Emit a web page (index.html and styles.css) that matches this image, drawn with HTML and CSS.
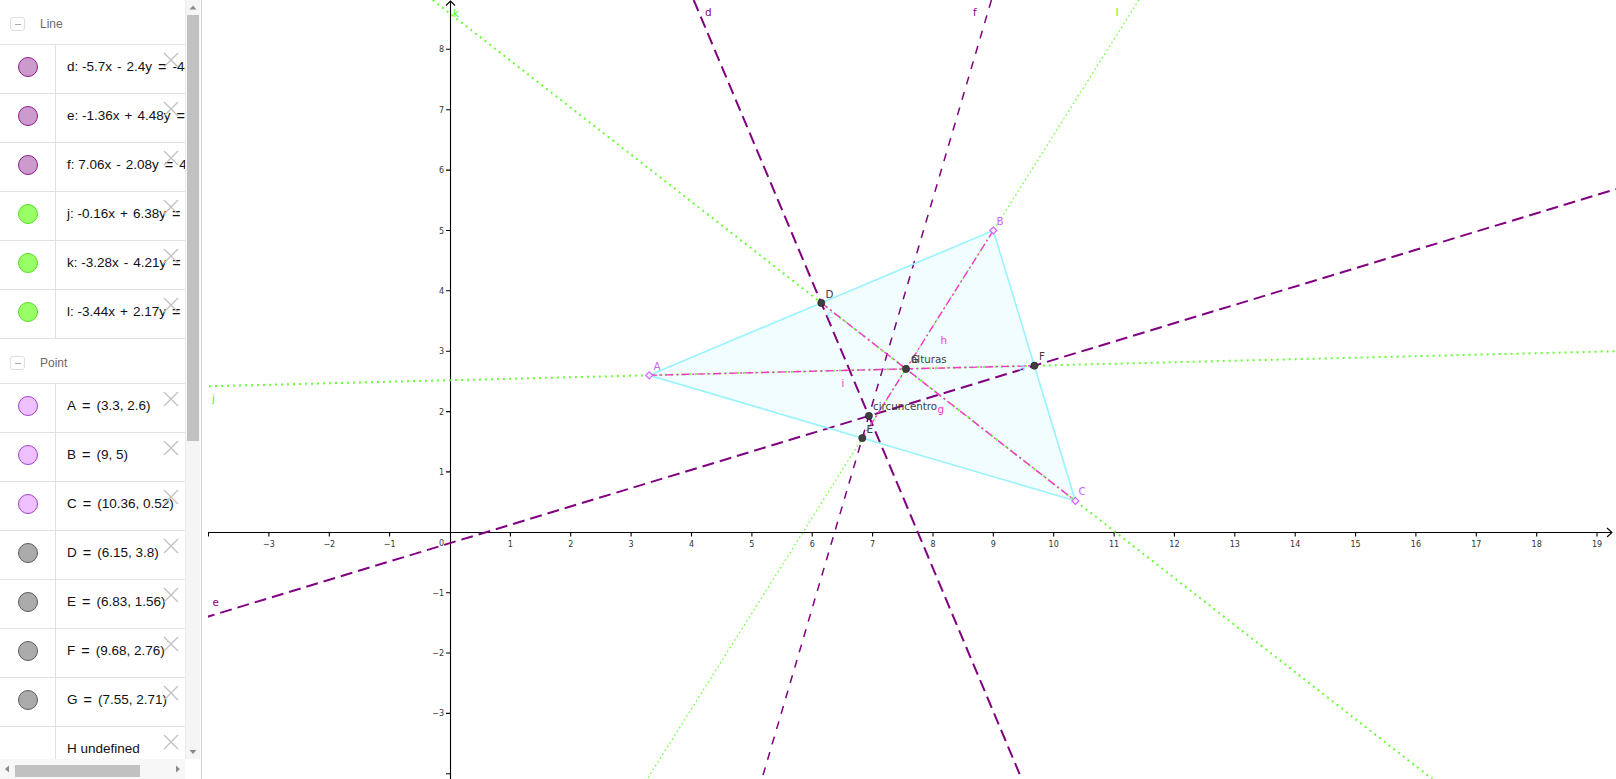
FILE: index.html
```html
<!DOCTYPE html>
<html lang="es">
<head>
<meta charset="utf-8">
<title>GeoGebra</title>
<link rel="stylesheet" href="styles.css">
</head>
<body>
<div class="app">
  <aside class="algebra">
    <div class="list">
      <div class="group-head"><span class="toggle"></span><span class="head-label">Line</span></div>
      <div class="item"><div class="marble-cell"><span class="marble m-purple"></span></div><div class="desc">d: -5.7x<span class="op">-</span>2.4y<span class="eq">=</span>-44.18</div><svg class="del" viewBox="0 0 16 16"><path d="M1 1L15 15M15 1L1 15"/></svg></div>
      <div class="item"><div class="marble-cell"><span class="marble m-purple"></span></div><div class="desc">e: -1.36x<span class="op">+</span>4.48y<span class="eq">=</span>-0.8</div><svg class="del" viewBox="0 0 16 16"><path d="M1 1L15 15M15 1L1 15"/></svg></div>
      <div class="item"><div class="marble-cell"><span class="marble m-purple"></span></div><div class="desc">f: 7.06x<span class="op">-</span>2.08y<span class="eq">=</span>44.97</div><svg class="del" viewBox="0 0 16 16"><path d="M1 1L15 15M15 1L1 15"/></svg></div>
      <div class="item"><div class="marble-cell"><span class="marble m-green"></span></div><div class="desc">j: -0.16x<span class="op">+</span>6.38y<span class="eq">=</span>16.06</div><svg class="del" viewBox="0 0 16 16"><path d="M1 1L15 15M15 1L1 15"/></svg></div>
      <div class="item"><div class="marble-cell"><span class="marble m-green"></span></div><div class="desc">k: -3.28x<span class="op">-</span>4.21y<span class="eq">=</span>-36.17</div><svg class="del" viewBox="0 0 16 16"><path d="M1 1L15 15M15 1L1 15"/></svg></div>
      <div class="item"><div class="marble-cell"><span class="marble m-green"></span></div><div class="desc">l: -3.44x<span class="op">+</span>2.17y<span class="eq">=</span>-20.11</div><svg class="del" viewBox="0 0 16 16"><path d="M1 1L15 15M15 1L1 15"/></svg></div>
      <div class="group-head"><span class="toggle"></span><span class="head-label">Point</span></div>
      <div class="item"><div class="marble-cell"><span class="marble m-violet"></span></div><div class="desc">A<span class="eq">=</span>(3.3, 2.6)</div><svg class="del" viewBox="0 0 16 16"><path d="M1 1L15 15M15 1L1 15"/></svg></div>
      <div class="item"><div class="marble-cell"><span class="marble m-violet"></span></div><div class="desc">B<span class="eq">=</span>(9, 5)</div><svg class="del" viewBox="0 0 16 16"><path d="M1 1L15 15M15 1L1 15"/></svg></div>
      <div class="item"><div class="marble-cell"><span class="marble m-violet"></span></div><div class="desc">C<span class="eq">=</span>(10.36, 0.52)</div><svg class="del" viewBox="0 0 16 16"><path d="M1 1L15 15M15 1L1 15"/></svg></div>
      <div class="item"><div class="marble-cell"><span class="marble m-gray"></span></div><div class="desc">D<span class="eq">=</span>(6.15, 3.8)</div><svg class="del" viewBox="0 0 16 16"><path d="M1 1L15 15M15 1L1 15"/></svg></div>
      <div class="item"><div class="marble-cell"><span class="marble m-gray"></span></div><div class="desc">E<span class="eq">=</span>(6.83, 1.56)</div><svg class="del" viewBox="0 0 16 16"><path d="M1 1L15 15M15 1L1 15"/></svg></div>
      <div class="item"><div class="marble-cell"><span class="marble m-gray"></span></div><div class="desc">F<span class="eq">=</span>(9.68, 2.76)</div><svg class="del" viewBox="0 0 16 16"><path d="M1 1L15 15M15 1L1 15"/></svg></div>
      <div class="item"><div class="marble-cell"><span class="marble m-gray"></span></div><div class="desc">G<span class="eq">=</span>(7.55, 2.71)</div><svg class="del" viewBox="0 0 16 16"><path d="M1 1L15 15M15 1L1 15"/></svg></div>
      <div class="item"><div class="marble-cell"></div><div class="desc">H undefined</div><svg class="del" viewBox="0 0 16 16"><path d="M1 1L15 15M15 1L1 15"/></svg></div>
    </div>
    <div class="vscroll">
      <svg class="sb-btn" viewBox="0 0 14 14"><path d="M3.5 9.5L7 5.5L10.5 9.5Z"/></svg>
      <div class="vthumb"></div>
      <div class="sb-fill"></div>
      <svg class="sb-btn" viewBox="0 0 14 14"><path d="M3.5 5L7 9L10.5 5Z"/></svg>
    </div>
    <div class="hscroll">
      <svg class="sb-hbtn" viewBox="0 0 14 14"><path d="M9 3.5L5 7L9 10.5Z"/></svg>
      <div class="hthumb"></div>
      <div class="sb-fill"></div>
      <svg class="sb-hbtn" viewBox="0 0 14 14"><path d="M5 3.5L9 7L5 10.5Z"/></svg>
    </div>
    <div class="corner"></div>
  </aside>
  <div class="splitter"></div>
  <main class="graphics">
    <svg class="canvas" viewBox="208 0 1408 779" width="1408" height="779">
      <polygon class="tri" points="649.2,375.3 993.3,230.5 1075.4,500.9"/>
      <g class="axes">
        <line x1="208" y1="532.5" x2="1612" y2="532.5"/>
        <polyline points="1607,528 1612,532.5 1607,537"/>
        <line x1="450.5" y1="779" x2="450.5" y2="1"/>
        <polyline points="446,5.5 450.5,1 455,5.5"/>
        <path d="M208.5 532.5v4M268.9 532.5v4M329.3 532.5v4M389.6 532.5v4M510.4 532.5v4M570.7 532.5v4M631.1 532.5v4M691.5 532.5v4M751.9 532.5v4M812.2 532.5v4M872.6 532.5v4M933 532.5v4M993.3 532.5v4M1053.7 532.5v4M1114.1 532.5v4M1174.4 532.5v4M1234.8 532.5v4M1295.2 532.5v4M1355.6 532.5v4M1415.9 532.5v4M1476.3 532.5v4M1536.7 532.5v4M1597 532.5v4"/>
        <path d="M446 49.3h4.5M446 109.7h4.5M446 170.1h4.5M446 230.5h4.5M446 290.8h4.5M446 351.2h4.5M446 411.6h4.5M446 471.9h4.5M446 592.7h4.5M446 653h4.5M446 713.4h4.5M446 773.8h4.5"/>
      </g>
      <g class="ticklbl xl">
        <text x="268.9" y="546.5">−3</text><text x="329.3" y="546.5">−2</text><text x="389.6" y="546.5">−1</text>
        <text x="510.4" y="546.5">1</text><text x="570.7" y="546.5">2</text><text x="631.1" y="546.5">3</text><text x="691.5" y="546.5">4</text>
        <text x="751.9" y="546.5">5</text><text x="812.2" y="546.5">6</text><text x="872.6" y="546.5">7</text><text x="933" y="546.5">8</text>
        <text x="993.3" y="546.5">9</text><text x="1053.7" y="546.5">10</text><text x="1114.1" y="546.5">11</text><text x="1174.4" y="546.5">12</text>
        <text x="1234.8" y="546.5">13</text><text x="1295.2" y="546.5">14</text><text x="1355.6" y="546.5">15</text><text x="1415.9" y="546.5">16</text>
        <text x="1476.3" y="546.5">17</text><text x="1536.7" y="546.5">18</text><text x="1597" y="546.5">19</text>
      </g>
      <g class="ticklbl yl">
        <text x="444" y="52.3">8</text><text x="444" y="112.7">7</text><text x="444" y="173.1">6</text><text x="444" y="233.5">5</text>
        <text x="444" y="293.8">4</text><text x="444" y="354.2">3</text><text x="444" y="414.6">2</text><text x="444" y="474.9">1</text>
        <text x="444" y="546">0</text>
        <text x="444" y="595.7">−1</text><text x="444" y="656">−2</text><text x="444" y="716.4">−3</text>
      </g>
      <g class="green">
        <line x1="203" y1="386.4" x2="1616" y2="351.2"/>
        <line x1="432.6" y1="0" x2="1432.3" y2="779"/>
        <line class="thin" x1="1138.8" y1="0" x2="647.2" y2="779"/>
      </g>
      <g class="purple">
        <line x1="693.7" y1="0" x2="1021.7" y2="779"/>
        <line x1="203" y1="618.1" x2="1616" y2="189.1"/>
        <line class="thin" x1="991.4" y1="0" x2="761.9" y2="779"/>
      </g>
      <g class="tri-edge">
        <polygon points="649.2,375.3 993.3,230.5 1075.4,500.9"/>
      </g>
      <g class="pink">
        <line x1="649.2" y1="375.3" x2="1034.4" y2="365.7"/>
        <line x1="821.3" y1="302.9" x2="1075.4" y2="500.9"/>
        <line x1="993.3" y1="230.5" x2="862.3" y2="438.1"/>
      </g>
      <g class="free-pt">
        <polygon points="649.2,371.8 652.7,375.3 649.2,378.8 645.7,375.3"/>
        <polygon points="993.3,227 996.8,230.5 993.3,234 989.8,230.5"/>
        <polygon points="1075.4,497.4 1078.9,500.9 1075.4,504.4 1071.9,500.9"/>
      </g>
      <g class="dep-pt">
        <circle cx="821.3" cy="302.9" r="3.6"/>
        <circle cx="862.3" cy="438.1" r="3.6"/>
        <circle cx="1034.4" cy="365.7" r="3.6"/>
        <circle cx="906" cy="368.9" r="3.6"/>
        <circle cx="868.9" cy="415.9" r="3.6"/>
      </g>
      <g class="lbl lbl-dep">
        <text x="825.5" y="297.5">D</text>
        <text x="866.5" y="432.5">E</text>
        <text x="1039" y="359.5">F</text>
        <text x="911" y="363">G</text>
        <text x="911" y="363">alturas</text>
        <text x="873" y="410">circuncentro</text>
      </g>
      <g class="lbl lbl-free">
        <text x="653.5" y="370">A</text>
        <text x="996.5" y="224.8">B</text>
        <text x="1078.5" y="495">C</text>
      </g>
      <g class="lbl lbl-purple">
        <text x="705" y="15.5">d</text>
        <text x="973" y="16">f</text>
        <text x="212.5" y="606">e</text>
      </g>
      <g class="lbl lbl-green">
        <text x="453" y="16.5">k</text>
        <text x="1115.5" y="16">l</text>
        <text x="212" y="402">j</text>
      </g>
      <g class="lbl lbl-pink">
        <text x="841.5" y="386.5">i</text>
        <text x="940.5" y="343.5">h</text>
        <text x="937.5" y="413">g</text>
      </g>
      <g class="lbl lbl-cyan">
        <text x="827" y="317.5">c</text>
        <text x="1019" y="370.5">a</text>
      </g>
    </svg>
  </main>
</div>
</body>
</html>
```

FILE: styles.css
```css
html, body {
  margin: 0;
  padding: 0;
  background: #ffffff;
  overflow: hidden;
}

body {
  font-family: "Liberation Sans", Arial, sans-serif;
}

.app {
  display: flex;
  width: 1616px;
  height: 779px;
}

/* ---------- Algebra view ---------- */
.algebra {
  width: 200px;
  flex: none;
  display: grid;
  grid-template-columns: 185px 15px;
  grid-template-rows: 759px 20px;
  background: #ffffff;
}

.list {
  grid-row: 1;
  grid-column: 1;
  overflow: hidden;
}

.group-head {
  height: 45px;
  box-sizing: border-box;
  border-bottom: 1px solid #e2e2e2;
  display: flex;
  align-items: center;
  padding-top: 4px;
}

.toggle {
  width: 15px;
  height: 14px;
  box-sizing: border-box;
  border: 1px solid #dedede;
  border-radius: 3px;
  margin-left: 10px;
  display: flex;
  align-items: center;
  justify-content: center;
}

.toggle::after {
  content: "";
  width: 6px;
  height: 1px;
  background: #a8a8a8;
}

.head-label {
  margin-left: 15px;
  font-size: 12px;
  color: #6b6b6b;
}

.item {
  height: 49px;
  box-sizing: border-box;
  border-bottom: 1px solid #e2e2e2;
  display: flex;
  position: relative;
}

.marble-cell {
  width: 56px;
  flex: none;
  box-sizing: border-box;
  border-right: 1px solid #e2e2e2;
  display: flex;
  align-items: center;
  justify-content: center;
  padding-bottom: 4px;
}

.marble {
  width: 20px;
  height: 20px;
  box-sizing: border-box;
  border-radius: 50%;
  border: 1px solid;
}

.m-purple { background: #cc9acc; border-color: #8f1a8f; }
.m-green  { background: #99ff66; border-color: #55dd22; }
.m-violet { background: #eec0ff; border-color: #a040c8; }
.m-gray   { background: #ababab; border-color: #5c5c5c; }

.desc {
  flex: 1;
  min-width: 0;
  display: flex;
  align-items: center;
  padding-left: 11px;
  padding-bottom: 5px;
  white-space: pre;
  overflow: hidden;
  font-size: 13.5px;
  color: #111111;
}

.op {
  margin: 0 5px;
}

.eq {
  margin: 0 6px;
  font-size: 14.5px;
}

.del {
  position: absolute;
  right: 6px;
  top: 7px;
  width: 16px;
  height: 16px;
}

.del path {
  stroke: #c2c2c2;
  stroke-width: 1.4;
  fill: none;
}

/* scrollbars */
.vscroll {
  grid-row: 1;
  grid-column: 2;
  display: flex;
  flex-direction: column;
  background: #f5f5f5;
  border-left: 1px solid #ececec;
  box-sizing: border-box;
}

.sb-btn {
  width: 14px;
  height: 14px;
  flex: none;
}

.sb-btn path, .sb-hbtn path {
  fill: #8a8a8a;
}

.vthumb {
  height: 426px;
  margin: 1px 1px 0 1px;
  background: #c1c1c1;
  flex: none;
}

.sb-fill {
  flex: 1;
}

.hscroll {
  grid-row: 2;
  grid-column: 1;
  display: flex;
  align-items: center;
  background: #f7f7f7;
}

.sb-hbtn {
  width: 14px;
  height: 14px;
  flex: none;
}

.hthumb {
  width: 125px;
  height: 12px;
  margin-left: 1px;
  margin-top: 4px;
  background: #c1c1c1;
  flex: none;
}

.corner {
  grid-row: 2;
  grid-column: 2;
  background: #ffffff;
}

.splitter {
  width: 8px;
  flex: none;
  background: linear-gradient(to right, #ffffff 0, #ffffff 1px, #cfcfcf 1px, #cfcfcf 2px, #ffffff 2px);
}

/* ---------- Graphics view ---------- */
.graphics {
  flex: 1;
  min-width: 0;
  background: #ffffff;
}

.canvas {
  display: block;
}

.tri {
  fill: #f2fdff;
  stroke: none;
}

.tri-edge polygon {
  fill: none;
  stroke: #99f3ff;
  stroke-width: 1.6;
}

.axes line, .axes path, .axes polyline {
  stroke: #000000;
  stroke-width: 1.1;
  fill: none;
}

.ticklbl text {
  font-family: "DejaVu Sans", sans-serif;
  font-size: 8px;
  fill: #333333;
}

.xl text { text-anchor: middle; }
.yl text { text-anchor: end; }

.green line {
  stroke: #66ff33;
  stroke-width: 2;
  stroke-dasharray: 2 4;
}

.green line.thin {
  stroke-width: 1.3;
  stroke-dasharray: 1.5 3;
}

.purple line {
  stroke: #800080;
  stroke-width: 2;
  stroke-dasharray: 12 6;
}

.purple line.thin {
  stroke-width: 1.5;
  stroke-dasharray: 8 8;
}

.pink line {
  stroke: #ff33cc;
  stroke-width: 1.4;
  stroke-dasharray: 8 3 2 3;
}

.free-pt polygon {
  fill: #f7ecff;
  stroke: #cc66ff;
  stroke-width: 1.2;
}

.dep-pt circle {
  fill: #3f3f3f;
  stroke: #1f1f1f;
  stroke-width: 0.6;
}

.lbl text {
  font-family: "DejaVu Sans", sans-serif;
  font-size: 10.3px;
}

.lbl-dep text { fill: #404040; }
.lbl-free text { fill: #cc66ff; }
.lbl-purple text { fill: #800080; }
.lbl-green text { fill: #55ee22; }
.lbl-pink text { fill: #ff33cc; }
.lbl-cyan text { fill: #99f3ff; }
```
